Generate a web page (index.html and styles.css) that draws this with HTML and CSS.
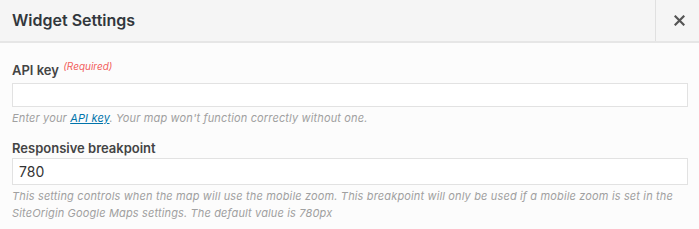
FILE: index.html
```html
<!DOCTYPE html>
<html>
<head>
<meta charset="utf-8">
<link rel="stylesheet" href="styles.css">
</head>
<body>
<div class="dialog">
  <div class="header">
    <h3 class="title">Widget Settings</h3>
    <div class="close">
      <svg width="11" height="11" viewBox="0 0 11 11"><path d="M1.5 1.5 L9.5 9.5 M9.5 1.5 L1.5 9.5" stroke="#555" stroke-width="2.2" stroke-linecap="square"/></svg>
    </div>
  </div>
  <div class="body">
    <div class="field">
      <label class="label">API key <span class="required">(Required)</span></label>
      <input class="input input-api" type="text" value="">
      <div class="help">Enter your <a href="#">API key</a>. Your map won't function correctly without one.</div>
    </div>
    <div class="field">
      <label class="label">Responsive breakpoint</label>
      <input class="input input-bp" type="text" value="780">
      <div class="help">This setting controls when the map will use the mobile zoom. This breakpoint will only be used if a mobile zoom is set in the SiteOrigin Google Maps settings. The default value is 780px</div>
    </div>
  </div>
</div>
</body>
</html>
```
FILE: styles.css
```css
html, body {
  margin: 0;
  padding: 0;
  background: #fcfcfc;
  font-family: "Inter", "Liberation Sans", sans-serif;
}
.dialog {
  width: 699px;
  height: 229px;
  overflow: hidden;
  background: #fcfcfc;
}
.header {
  display: flex;
  height: 43px;
  background: #f5f5f5;
  border-bottom: 2px solid #e6e6e6;
  box-sizing: border-box;
}
.title {
  flex: 1;
  margin: 0;
  padding-left: 12px;
  font-size: 16px;
  font-weight: 600;
  color: #32373c;
  line-height: 40px;
}
.close {
  width: 44px;
  border-left: 1px solid #e0e0e0;
  display: flex;
  align-items: center;
  justify-content: center;
  padding-left: 3px;
  box-sizing: border-box;
}
.body {
  padding: 14px 11px 0 12px;
}
.field {
  display: flex;
  flex-direction: column;
  margin-bottom: 12px;
}
.label {
  font-size: 13px;
  font-weight: 600;
  color: #444;
  line-height: 18px;
}
.required {
  font-size: 10px;
  font-weight: 400;
  font-style: italic;
  color: #f25f5c;
  vertical-align: 5px;
  margin-left: 1px;
}
.input {
  box-sizing: border-box;
  width: 676px;
  border: 1px solid #e2e2e2;
  background: #fff;
  font-family: inherit;
  font-size: 14px;
  color: #333;
  padding: 0 6px;
  margin: 0;
  outline: none;
}
.input-api {
  height: 24px;
  margin-top: 4px;
}
.input-bp {
  height: 27px;
  margin-top: 1px;
}
.help {
  font-size: 11px;
  font-style: italic;
  color: #a0a0a0;
  line-height: 17px;
  letter-spacing: 0.15px;
  margin-top: 3px;
}
.help a {
  color: #0073aa;
  text-decoration: underline;
}
```
